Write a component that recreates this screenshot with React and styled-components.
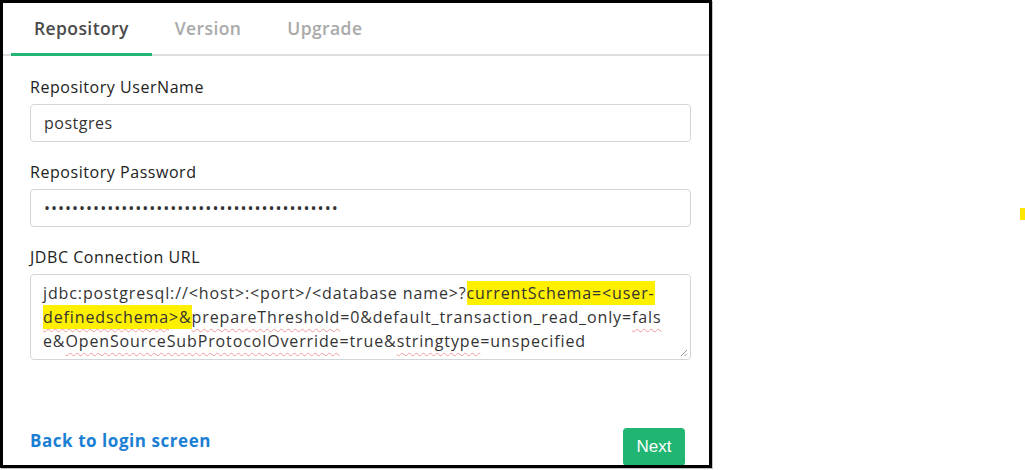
import React from "react";
import styled, { createGlobalStyle } from "styled-components";

const Global = createGlobalStyle`
  html, body { margin: 0; padding: 0; background: #fff; }
  body { font-family: "Open Sans", "Noto Sans", sans-serif; }
  * { box-sizing: border-box; }
`;

const Page = styled.div`
  display: flex;
  justify-content: space-between;
  align-items: flex-start;
  width: 1025px;
  height: 470px;
`;

const Frame = styled.div`
  width: 712px;
  height: 468px;
  border: 3px solid #000;
  box-shadow: 1px 1px 0 #c4c4c4;
  overflow: hidden;
  background: #fff;
  display: flex;
  flex-direction: column;
`;

const Marker = styled.div`
  width: 5px;
  height: 12px;
  margin-top: 208px;
  background: #ffe600;
`;

const TabBar = styled.div`
  display: flex;
  padding-left: 8px;
  border-bottom: 2px solid #dedede;
  height: 53px;
  flex-shrink: 0;
`;

const Tab = styled.div`
  padding: 0 23px;
  display: flex;
  align-items: center;
  font-size: 17.5px;
  font-weight: 600;
  letter-spacing: 0.4px;
  color: ${(p) => (p.$active ? "#4a4a4a" : "#a9a9a9")};
  border-bottom: 3px solid ${(p) => (p.$active ? "#21b573" : "transparent")};
  margin-bottom: -2px;
  padding-bottom: 1px;
`;

const Form = styled.div`
  padding: 20px 18px 0 27px;
  display: flex;
  flex-direction: column;
`;

const Group = styled.div`
  display: flex;
  flex-direction: column;
  margin-bottom: ${(p) => p.$mb ?? 19}px;
`;

const Label = styled.label`
  font-size: 16px;
  line-height: 22px;
  letter-spacing: 0.55px;
  color: #222;
  margin-bottom: 6px;
`;

const Input = styled.input`
  height: 38px;
  border: 1px solid #d2d6da;
  border-radius: 4px;
  padding: 0 13px;
  font-family: "Open Sans", sans-serif;
  font-size: 16px;
  color: #333;
  outline: none;
  background: #fff;
  letter-spacing: ${(p) => p.$ls ?? 0.5}px;
`;

const Area = styled.div`
  position: relative;
  height: 86px;
  border: 1px solid #d2d6da;
  border-radius: 4px;
  padding: 6px 12px 0 12px;
  overflow: hidden;
  font-size: 16px;
  line-height: 24px;
  color: #333;
  letter-spacing: 0.88px;
`;

const Line = styled.div`
  white-space: nowrap;
`;

const Mark = styled.span`
  background: #fff000;
  padding: 1px 0;
`;

const Spell = styled.span`
  text-decoration: underline wavy #f19a9a;
  text-decoration-thickness: 1px;
  text-underline-offset: 5px;
`;

const Grip = styled.svg`
  position: absolute;
  right: 2px;
  bottom: 2px;
`;

const Footer = styled.div`
  display: flex;
  justify-content: space-between;
  align-items: flex-start;
  margin-top: 68px;
  padding-right: 6px;
`;

const BackLink = styled.a`
  margin-top: 2px;
  font-size: 17px;
  line-height: 22px;
  font-weight: 700;
  letter-spacing: 0.55px;
  color: #1b7fd3;
  text-decoration: none;
  cursor: pointer;
`;

const NextButton = styled.button`
  width: 62px;
  height: 38px;
  border: none;
  border-radius: 4px;
  background: #21b573;
  color: #fff;
  font-family: "Liberation Sans", Arial, sans-serif;
  font-size: 17px;
  padding: 0;
  cursor: pointer;
`;

export default function App() {
  return (
    <>
      <Global />
      <Page>
        <Frame>
          <TabBar>
            <Tab $active>Repository</Tab>
            <Tab>Version</Tab>
            <Tab>Upgrade</Tab>
          </TabBar>
          <Form>
            <Group>
              <Label>Repository UserName</Label>
              <Input readOnly value="postgres" />
            </Group>
            <Group>
              <Label>Repository Password</Label>
              <Input type="password" readOnly value={"x".repeat(42)} $ls={1.0} />
            </Group>
            <Group $mb={0}>
              <Label>JDBC Connection URL</Label>
              <Area>
                <Line>
                  jdbc:postgresql://&lt;host&gt;:&lt;port&gt;/&lt;database name&gt;?
                  <Mark>currentSchema=&lt;user-</Mark>
                </Line>
                <Line>
                  <Mark>
                    <Spell>definedschema</Spell>&gt;&amp;
                  </Mark>
                  <Spell>prepareThreshold</Spell>=0&amp;default_transaction_read_only=<Spell>fals</Spell>
                </Line>
                <Line>
                  e&amp;<Spell>OpenSourceSubProtocolOverride</Spell>=true&amp;<Spell>stringtype</Spell>=unspecified
                </Line>
                <Grip width="8" height="8" viewBox="0 0 8 8">
                  <path d="M7 1 L1 7 M7 4.5 L4.5 7" stroke="#999" strokeWidth="1" fill="none" />
                </Grip>
              </Area>
            </Group>
            <Footer>
              <BackLink>Back to login screen</BackLink>
              <NextButton>Next</NextButton>
            </Footer>
          </Form>
        </Frame>
        <Marker />
      </Page>
    </>
  );
}
